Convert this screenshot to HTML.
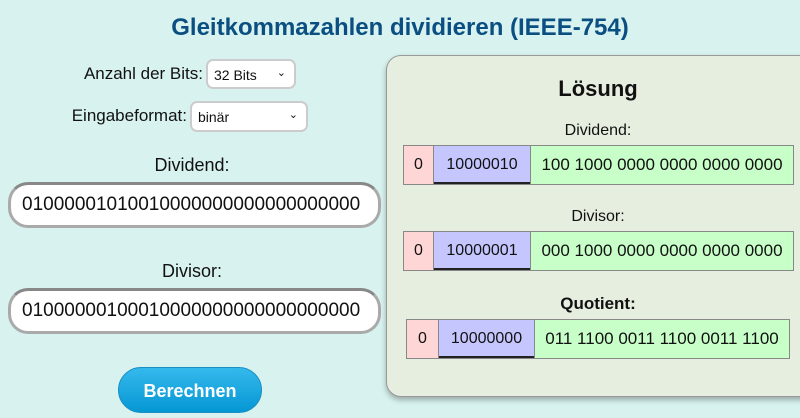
<!DOCTYPE html>
<html><head><meta charset="utf-8"><style>
*{box-sizing:border-box;margin:0;padding:0}
body{width:800px;height:418px;overflow:hidden;background:#d8f3ef;font-family:"Liberation Sans",Arial,sans-serif;position:relative;color:#111}
.a{position:absolute}
h1{position:absolute;left:0;width:800px;top:14px;text-align:center;font-size:24px;color:#0b4f82;font-weight:bold}
.sel{position:absolute;background:#fff;border:2px solid #ccc;border-radius:7px;font-size:14px;padding:6px 0 0 6px}
.sel span{position:absolute;right:8px;top:5px;font-size:11px}
.inp{position:absolute;left:8px;width:373px;height:46px;background:#fff;border:3px solid #aaa;border-top-color:#888;border-radius:20px;font-size:19px;padding:9px 0 0 11px}
.lbl{font-size:18px;text-align:center;width:384px;left:0}
.btn{left:118px;top:367px;width:144px;height:46px;border-radius:23px;background:linear-gradient(#35b9ec,#0597d4);color:#fff;font-weight:bold;font-size:18px;text-align:center;line-height:46px;border:1px solid #1a8fc4}
.panel{left:386px;top:55px;width:430px;height:342px;background:#e6efdf;border:1px solid #999;border-radius:15px;box-shadow:0 3px 6px rgba(0,0,0,.3)}
.t{position:absolute;display:flex;height:40px;border:1px solid #888;font-size:16px}
.t div{display:flex;align-items:center;justify-content:center;border-right:1px solid #888}
.p{background:#ffd6d6}.b{background:#c6c6ff;box-shadow:inset 0 -2px 0 #222}.g{background:#c8ffc8;border-right:none!important;font-size:17px}
.c{text-align:center;font-size:16px}
</style></head><body>
<h1>Gleitkommazahlen dividieren (IEEE-754)</h1>
<div class="a" style="right:597px;top:64px;font-size:17px">Anzahl der Bits:</div>
<div class="sel" style="left:206px;top:59px;width:90px;height:30px">32 Bits<span>⌄</span></div>
<div class="a" style="right:613px;top:106px;font-size:17px">Eingabeformat:</div>
<div class="sel" style="left:190px;top:101px;width:118px;height:31px">binär<span>⌄</span></div>
<div class="a lbl" style="top:155px">Dividend:</div>
<div class="inp" style="top:182px">01000001010010000000000000000000</div>
<div class="a lbl" style="top:261px">Divisor:</div>
<div class="inp" style="top:288px">01000000100010000000000000000000</div>
<div class="a btn">Berechnen</div>
<div class="a panel"></div>
<div class="a" style="left:386px;width:424px;top:76px;text-align:center;font-size:22px;font-weight:bold">Lösung</div>
<div class="a c" style="left:386px;width:424px;top:122px">Dividend:</div>
<div class="t" style="left:403px;top:145px;width:391px"><div class="p" style="width:30px">0</div><div class="b" style="width:97px">10000010</div><div class="g" style="flex:1">100 1000 0000 0000 0000 0000</div></div>
<div class="a c" style="left:386px;width:424px;top:208px">Divisor:</div>
<div class="t" style="left:403px;top:231px;width:391px"><div class="p" style="width:30px">0</div><div class="b" style="width:97px">10000001</div><div class="g" style="flex:1">000 1000 0000 0000 0000 0000</div></div>
<div class="a c" style="left:386px;width:424px;top:294px;font-weight:bold;font-size:17px">Quotient:</div>
<div class="t" style="left:406px;top:319px;width:384px"><div class="p" style="width:32px">0</div><div class="b" style="width:96px">10000000</div><div class="g" style="flex:1">011 1100 0011 1100 0011 1100</div></div>
</body></html>
